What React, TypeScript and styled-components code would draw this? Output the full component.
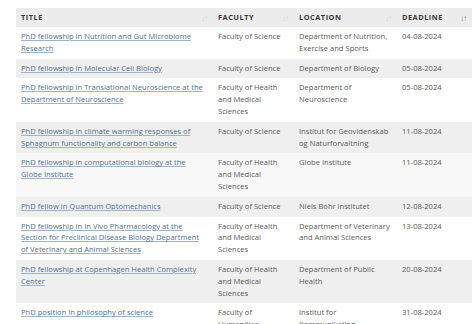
import React from 'react';
import styled, { createGlobalStyle } from 'styled-components';

const GlobalStyle = createGlobalStyle`
  body {
    margin: 0;
    background: #fff;
    font-family: "Open Sans", "Liberation Sans", sans-serif;
  }
`;

const Page = styled.div`
  padding: 8px 2px 0 16px;
`;

const Table = styled.table`
  width: 456px;
  border-collapse: collapse;
  table-layout: fixed;
  font-size: 7.6px;
  line-height: 11.8px;
  color: #5a5a5a;
`;

const HeadCell = styled.th<{ $w: number }>`
  box-sizing: border-box;
  width: ${(p) => p.$w}px;
  background: #ececec;
  height: 19px;
  padding: 0 5px;
  text-align: left;
  font-weight: 700;
  font-size: 7.4px;
  letter-spacing: 0.5px;
  color: #3a3a3a;
  text-transform: uppercase;
`;

const HeadInner = styled.div`
  display: flex;
  align-items: center;
  justify-content: space-between;
`;

const SortIcon = styled.span<{ $active?: boolean }>`
  font-size: 8px;
  letter-spacing: -1px;
  color: ${(p) => (p.$active ? '#8a8a8a' : '#d4d4d4')};
  font-weight: 400;
  padding-right: 1px;
`;

const Row = styled.tr<{ $bg: string }>`
  background: ${(p) => p.$bg};
`;

const Cell = styled.td`
  vertical-align: top;
  padding: 4px 5px;
`;

const TitleLink = styled.a`
  color: #4f6f93;
  text-decoration: underline;
  text-decoration-color: #9fb2c7;
  text-underline-offset: 1px;
`;

type Job = {
  title: string;
  faculty: string;
  location: string;
  deadline: string;
};

const jobs: Job[] = [
  { title: 'PhD fellowship in Nutrition and Gut Microbiome Research', faculty: 'Faculty of Science', location: 'Department of Nutrition, Exercise and Sports', deadline: '04-08-2024' },
  { title: 'PhD fellowship in Molecular Cell Biology', faculty: 'Faculty of Science', location: 'Department of Biology', deadline: '05-08-2024' },
  { title: 'PhD fellowship in Translational Neuroscience at the Department of Neuroscience', faculty: 'Faculty of Health and Medical Sciences', location: 'Department of Neuroscience', deadline: '05-08-2024' },
  { title: 'PhD fellowship in climate warming responses of Sphagnum functionality and carbon balance', faculty: 'Faculty of Science', location: 'Institut for Geovidenskab og Naturforvaltning', deadline: '11-08-2024' },
  { title: 'PhD fellowship in computational biology at the Globe Institute', faculty: 'Faculty of Health and Medical Sciences', location: 'Globe Institute', deadline: '11-08-2024' },
  { title: 'PhD fellow in Quantum Optomechanics', faculty: 'Faculty of Science', location: 'Niels Bohr institutet', deadline: '12-08-2024' },
  { title: 'PhD fellowship in In Vivo Pharmacology at the Section for Preclinical Disease Biology Department of Veterinary and Animal Sciences', faculty: 'Faculty of Health and Medical Sciences', location: 'Department of Veterinary and Animal Sciences', deadline: '13-08-2024' },
  { title: 'PhD fellowship at Copenhagen Health Complexity Center', faculty: 'Faculty of Health and Medical Sciences', location: 'Department of Public Health', deadline: '20-08-2024' },
  { title: 'PhD position in philosophy of science', faculty: 'Faculty of Humanities', location: 'Institut for Kommunikation', deadline: '31-08-2024' },
];

const rowBg = ['#ffffff', '#efefef', '#ffffff', '#efefef', '#f8f8f8', '#efefef', '#ffffff', '#efefef', '#ffffff'];

const columns = [
  { label: 'Title', w: 197 },
  { label: 'Faculty', w: 81 },
  { label: 'Location', w: 103 },
  { label: 'Deadline', w: 75, active: true },
];

const App = () => {
  return (
    <Page>
      <GlobalStyle />
      <Table>
        <thead>
          <tr>
            {columns.map((c) => (
              <HeadCell key={c.label} $w={c.w}>
                <HeadInner>
                  {c.label}
                  <SortIcon $active={c.active}>↓↑</SortIcon>
                </HeadInner>
              </HeadCell>
            ))}
          </tr>
        </thead>
        <tbody>
          {jobs.map((j, i) => (
            <Row key={j.title} $bg={rowBg[i]}>
              <Cell>
                <TitleLink href="#">{j.title}</TitleLink>
              </Cell>
              <Cell>{j.faculty}</Cell>
              <Cell>{j.location}</Cell>
              <Cell>{j.deadline}</Cell>
            </Row>
          ))}
        </tbody>
      </Table>
    </Page>
  );
};

export default App;
